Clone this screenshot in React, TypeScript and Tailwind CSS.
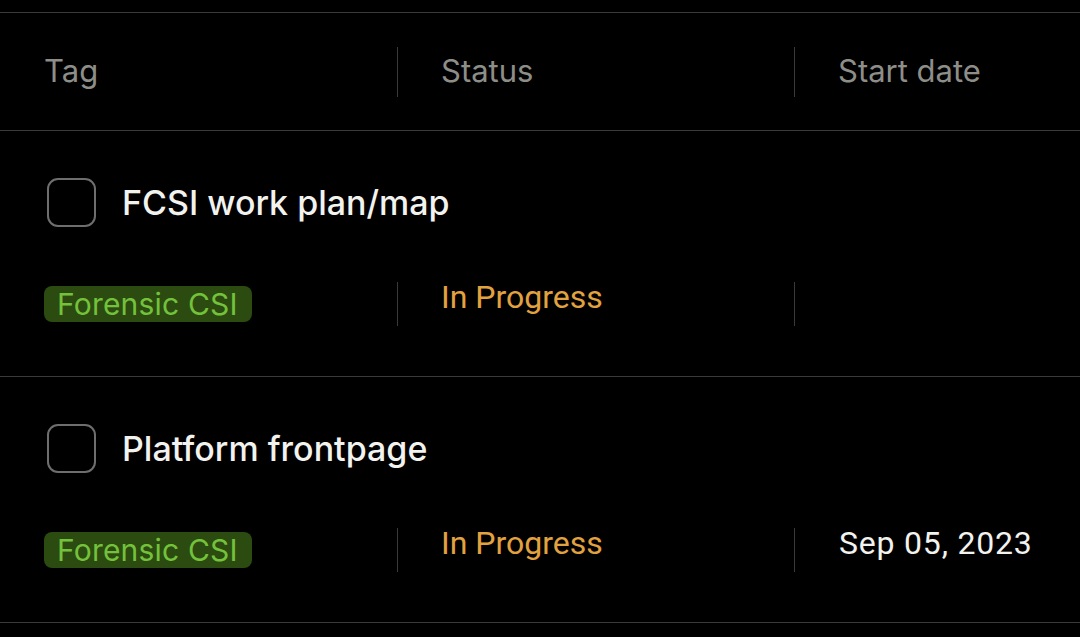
import React from "react";

const rows = [
  { title: "FCSI work plan/map", tag: "Forensic CSI", status: "In Progress", date: "" },
  { title: "Platform frontpage", tag: "Forensic CSI", status: "In Progress", date: "Sep 05, 2023" },
];

export default function App() {
  return (
    <div className="w-[1080px] h-[637px] bg-black overflow-hidden pt-[12px]" style={{ fontFamily: "Inter, 'Noto Sans', sans-serif" }}>
      <div className="border-t border-[#3a3a3a]">
        {/* header */}
        <div className="grid grid-cols-[397px_397px_1fr] h-[118px] items-center border-b border-[#3a3a3a] text-[31px] text-[#8e8e89]">
          <div className="pl-[44px] h-[50px] flex items-center">Tag</div>
          <div className="border-l border-[#3a3a3a] pl-[43px] h-[50px] flex items-center">Status</div>
          <div className="border-l border-[#3a3a3a] pl-[43px] h-[50px] flex items-center">Start date</div>
        </div>
        {rows.map((r, i) => (
          <div key={i} className="h-[246px] border-b border-[#3a3a3a]">
            <div className="flex items-center pl-[47px] pt-[47px] h-[96px]">
              <div className="w-[49px] h-[49px] rounded-[11px] border-2 border-[#6e6e6e] shrink-0" />
              <div className="ml-[26px] text-[34px] font-medium text-[#f2f2ee] leading-none">{r.title}</div>
            </div>
            <div className="grid grid-cols-[397px_397px_1fr] mt-[55px] items-center">
              <div className="pl-[44px] h-[44px] flex items-center">
                <span className="bg-[#2b4b10] text-[#74c13c] text-[30px] tracking-[0.2px] leading-[36px] h-[36px] pl-[13px] pr-[14px] rounded-[8px]">{r.tag}</span>
              </div>
              <div className="border-l border-[#3a3a3a] pl-[43px] h-[44px] flex items-start">
                <span className="text-[32px] text-[#e2a23f] leading-[30px]" style={{ fontFamily: "Roboto, sans-serif" }}>{r.status}</span>
              </div>
              <div className="border-l border-[#3a3a3a] pl-[44px] h-[44px] flex items-start">
                <span className="text-[32px] tracking-[0.8px] text-[#f2f2ee] leading-[30px]" style={{ fontFamily: "Roboto, sans-serif" }}>{r.date}</span>
              </div>
            </div>
          </div>
        ))}
      </div>
    </div>
  );
}
